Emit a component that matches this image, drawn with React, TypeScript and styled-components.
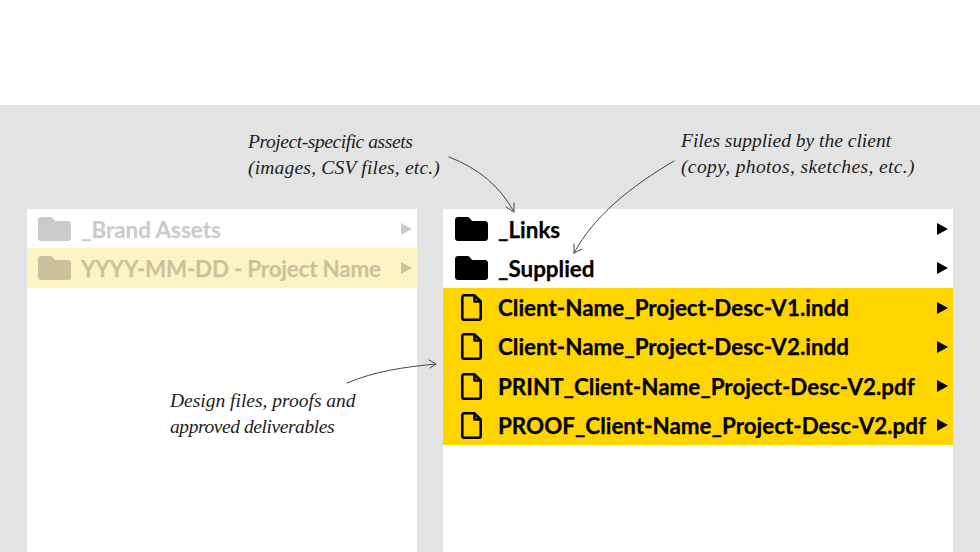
import React from "react";
import styled, { createGlobalStyle } from "styled-components";

const Global = createGlobalStyle`
  html, body { margin: 0; padding: 0; background: #fff; }
  body { width: 980px; height: 552px; overflow: hidden; font-family: "Lato", "Liberation Sans", sans-serif; }
`;

const Stage = styled.div`
  position: relative;
  width: 980px;
  height: 552px;
  padding-top: 105px;
  box-sizing: border-box;
  overflow: hidden;
  background: #fff;
`;

const Band = styled.div`
  height: 447px;
  box-sizing: border-box;
  padding: 104px 27px 0;
  background: #e3e3e3;
  display: grid;
  grid-template-columns: 390px 510px;
  column-gap: 26px;
`;

const Panel = styled.div`
  background: #fff;
  height: 343px;
`;

const Row = styled.div<{ $hl?: boolean; $inset: number; $faded?: boolean }>`
  height: 39.25px;
  display: flex;
  align-items: center;
  box-sizing: border-box;
  padding: 1px 5px 0 ${(p) => p.$inset}px;
  background: ${(p) => (p.$hl ? "#ffd500" : "transparent")};
  color: #000;
  opacity: ${(p) => (p.$faded ? 0.2 : 1)};
`;

const FadedRowBg = styled.div<{ $hl?: boolean }>`
  background: ${(p) => (p.$hl ? "#fdf4c6" : "transparent")};
`;

const IconSlot = styled.span`
  width: 33px;
  flex: none;
  display: flex;
  justify-content: center;
  margin-right: 10px;
`;

const Name = styled.span<{ $track?: number }>`
  flex: 1;
  font-size: 22.4px;
  font-weight: 700;
  letter-spacing: ${(p) => p.$track ?? 0}px;
  -webkit-text-stroke: 0.25px currentColor;
  white-space: nowrap;
`;

const Caret = styled.svg`
  flex: none;
  width: 11px;
  height: 12px;
`;

const Note = styled.div<{ $x: number; $y: number }>`
  position: absolute;
  left: ${(p) => p.$x}px;
  top: ${(p) => p.$y}px;
  font-family: "Liberation Serif", serif;
  font-style: italic;
  font-size: 19.5px;
  line-height: 26px;
  color: #1d1d1d;
  white-space: nowrap;
`;

const NoteLine = styled.div<{ $track: number }>`
  letter-spacing: ${(p) => p.$track}px;
`;

const Arrows = styled.svg`
  position: absolute;
  left: 0;
  top: 0;
  width: 980px;
  height: 552px;
  pointer-events: none;
`;

const Folder = () => (
  <svg width="33" height="24" viewBox="0 0 33 24">
    <path d="M3 0h9c1.500 0 2.500.6 3.300 1.700L17 4h13c1.700 0 3 1.300 3 3v14c0 1.700-1.300 3-3 3H3c-1.700 0-3-1.300-3-3V3c0-1.700 1.300-3 3-3z" fill="currentColor" />
  </svg>
);

const FileIcon = () => (
  <svg width="21" height="27" viewBox="0 0 21 27">
    <path d="M3 1.300h10.500l6.200 6.200V24a1.700 1.700 0 0 1-1.700 1.700H3A1.700 1.700 0 0 1 1.300 24V3A1.700 1.700 0 0 1 3 1.300zM13.500 1.300v6.200h6.200" fill="none" stroke="currentColor" strokeWidth="2.600" strokeLinejoin="round" />
  </svg>
);

const Tri = () => (
  <Caret viewBox="0 0 11 12">
    <path d="M0 0l11 6-11 6z" fill="currentColor" />
  </Caret>
);

const leftRows = [
  { name: "_Brand Assets", track: 0 },
  { name: "YYYY-MM-DD - Project Name", hl: true, track: -0.2 },
];

const rightRows = [
  { name: "_Links", kind: "folder" },
  { name: "_Supplied", kind: "folder" },
  { name: "Client-Name_Project-Desc-V1.indd", kind: "file" },
  { name: "Client-Name_Project-Desc-V2.indd", kind: "file" },
  { name: "PRINT_Client-Name_Project-Desc-V2.pdf", kind: "file" },
  { name: "PROOF_Client-Name_Project-Desc-V2.pdf", kind: "file" },
];

export default function App() {
  return (
    <>
      <Global />
      <Stage>
        <Band>
          <Panel>
            {leftRows.map((r) => (
              <FadedRowBg key={r.name} $hl={r.hl}>
                <Row $inset={11} $faded>
                  <IconSlot><Folder /></IconSlot>
                  <Name $track={r.track}>{r.name}</Name>
                  <Tri />
                </Row>
              </FadedRowBg>
            ))}
          </Panel>
          <Panel>
            {rightRows.map((r) => (
              <Row key={r.name} $inset={12} $hl={r.kind === "file"}>
                <IconSlot>{r.kind === "folder" ? <Folder /> : <FileIcon />}</IconSlot>
                <Name>{r.name}</Name>
                <Tri />
              </Row>
            ))}
          </Panel>
        </Band>
        <Note $x={248} $y={129}>
          <NoteLine $track={-0.43}>Project-specific assets</NoteLine>
          <NoteLine $track={0.2}>(images, CSV files, etc.)</NoteLine>
        </Note>
        <Note $x={681} $y={128}>
          <NoteLine $track={0}>Files supplied by the client</NoteLine>
          <NoteLine $track={0.38}>(copy, photos, sketches, etc.)</NoteLine>
        </Note>
        <Note $x={170} $y={388}>
          <NoteLine $track={0}>Design files, proofs and</NoteLine>
          <NoteLine $track={-0.43}>approved deliverables</NoteLine>
        </Note>
        <Arrows viewBox="0 0 980 552" fill="none" stroke="#444" strokeWidth="1" strokeLinecap="round">
          <path d="M449 157C478 168 500 186 514 212M506 207l8 5 0-9" />
          <path d="M674 161C630 187 594 216 574 253M574 244l0 9 8-4" />
          <path d="M347 383C375 371 405 367 436 364M429 360l7 4-6 4" />
        </Arrows>
      </Stage>
    </>
  );
}
